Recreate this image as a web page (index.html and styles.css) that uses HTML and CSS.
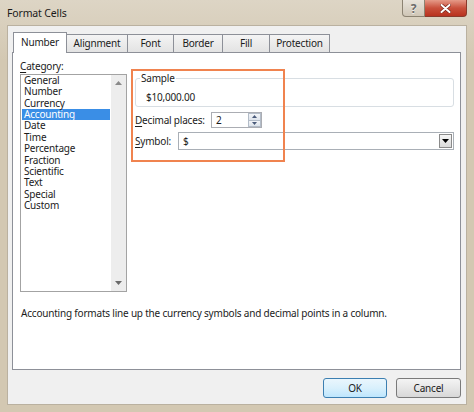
FILE: index.html
```html
<!DOCTYPE html>
<html lang="en">
<head>
<meta charset="utf-8">
<title>Format Cells</title>
<link rel="stylesheet" href="styles.css">
</head>
<body>
<div class="window">
  <div class="titlebar">
    <span class="title">Format Cells</span>
    <div class="caption-buttons">
      <span class="cap-btn cap-help">?</span>
      <span class="cap-btn cap-close">
        <svg width="11" height="9" viewBox="0 0 11 9"><path d="M1.5 1 L9.5 8 M9.5 1 L1.5 8" stroke="#7a2418" stroke-width="3.4" stroke-linecap="round"/><path d="M1.5 1 L9.5 8 M9.5 1 L1.5 8" stroke="#ffffff" stroke-width="2" stroke-linecap="round"/></svg>
      </span>
    </div>
  </div>
  <div class="client">
    <div class="tabs">
      <div class="tab tab-active tab-number">Number</div>
      <div class="tab tab-alignment">Alignment</div>
      <div class="tab tab-font">Font</div>
      <div class="tab tab-border">Border</div>
      <div class="tab tab-fill">Fill</div>
      <div class="tab tab-protection">Protection</div>
    </div>
    <div class="panel">
      <div class="left-col">
        <div class="field-label category-label"><u>C</u>ategory:</div>
        <div class="listbox">
          <ul class="list-items">
            <li>General</li>
            <li>Number</li>
            <li>Currency</li>
            <li class="selected">Accounting</li>
            <li>Date</li>
            <li>Time</li>
            <li>Percentage</li>
            <li>Fraction</li>
            <li>Scientific</li>
            <li>Text</li>
            <li>Special</li>
            <li>Custom</li>
          </ul>
          <div class="scrollbar">
            <svg class="arrow" width="7" height="4" viewBox="0 0 7 4"><path d="M0 4 L3.5 0 L7 4 Z" fill="#8a8a8a"/></svg>
            <svg class="arrow" width="7" height="4" viewBox="0 0 7 4"><path d="M0 0 L7 0 L3.5 4 Z" fill="#6a6a6a"/></svg>
          </div>
        </div>
      </div>
      <div class="right-col">
        <fieldset class="group">
          <legend>Sample</legend>
          <div class="sample-value">$10,000.00</div>
        </fieldset>
        <div class="field-row decimal-row">
          <span class="field-label decimal-label"><u>D</u>ecimal places:</span>
          <div class="spinner">
            <span class="spinner-value">2</span>
            <div class="spin-buttons">
              <span class="spin-btn"><svg width="5" height="3" viewBox="0 0 5 3"><path d="M0 3 L2.5 0 L5 3 Z" fill="#4a5a7a"/></svg></span>
              <span class="spin-btn"><svg width="5" height="3" viewBox="0 0 5 3"><path d="M0 0 L5 0 L2.5 3 Z" fill="#4a5a7a"/></svg></span>
            </div>
          </div>
        </div>
        <div class="field-row symbol-row">
          <span class="field-label symbol-label"><u>S</u>ymbol:</span>
          <div class="select">
            <span class="select-value">$</span>
            <span class="select-btn"><svg width="7" height="4" viewBox="0 0 7 4"><path d="M0 0 L7 0 L3.5 4 Z" fill="#000"/></svg></span>
          </div>
        </div>
      </div>
      <p class="description">Accounting formats line up the currency symbols and decimal points in a column.</p>
      <div class="highlight"></div>
    </div>
    <div class="footer">
      <button class="btn btn-default">OK</button>
      <button class="btn btn-cancel">Cancel</button>
    </div>
  </div>
</div>
</body>
</html>
```
FILE: styles.css
```css
* { box-sizing: border-box; }
html, body { margin: 0; padding: 0; }
body {
  width: 474px;
  height: 412px;
  overflow: hidden;
  font-family: "Noto Sans", "Open Sans", sans-serif;
  font-size: 10px;
  letter-spacing: -0.2px;
  color: #1b1b1b;
  background: #d4c9b4;
}
.window {
  width: 474px;
  height: 412px;
  display: flex;
  flex-direction: column;
  background: linear-gradient(#ddd5c5, #d3c8b2 60px, #d3c8b2);
}
.titlebar {
  height: 25px;
  display: flex;
  align-items: flex-start;
}
.title {
  padding: 6px 0 0 7px;
  font-size: 10.5px;
  letter-spacing: -0.15px;
  line-height: 15px;
  color: #1a1a1a;
}
.caption-buttons {
  margin-left: auto;
  margin-right: 7px;
  display: flex;
}
.cap-btn {
  height: 17px;
  display: flex;
  align-items: center;
  justify-content: center;
  border: 1px solid #8c8372;
  border-top: none;
}
.cap-help {
  width: 23px;
  border-radius: 0 0 0 4px;
  background: linear-gradient(#e8e3da, #cfc6b6);
  color: #6b6b6b;
  font-size: 12px;
  font-weight: bold;
  text-shadow: 0 1px 0 #f4f1ea;
}
.cap-close {
  width: 42px;
  border-left: none;
  border-color: #8a3a2c;
  border-radius: 0 0 4px 0;
  background: linear-gradient(#e59a88, #c9503c 50%, #b8321f);
}
.client {
  height: 380px;
  margin: 0 7px;
  background: #f0f0f0;
  border: 1px solid #bab1a0;
  display: flex;
  flex-direction: column;
}
.tabs {
  display: flex;
  align-items: flex-start;
  height: 26px;
  padding: 6px 0 0 5px;
  position: relative;
  z-index: 1;
}
.tab {
  height: 18px;
  margin-top: 2px;
  margin-left: -1px;
  border: 1px solid #8d9098;
  border-bottom: none;
  background: linear-gradient(#f4f4f4, #e3e3e3);
  text-align: center;
  line-height: 16px;
  color: #1b1b1b;
}
.tab-active {
  height: 21px;
  margin-top: 0;
  margin-left: 0;
  background: #fff;
  line-height: 19px;
}
.tab-number { width: 54px; }
.tab-alignment { width: 62px; }
.tab-font { width: 47px; }
.tab-border { width: 50px; }
.tab-fill { width: 48px; }
.tab-protection { width: 61px; }
.panel {
  position: relative;
  height: 318px;
  margin: 0 5px 0 4px;
  background: #fff;
  border: 1px solid #8d9098;
  display: grid;
  grid-template-columns: 107px 1fr;
  grid-template-rows: 233px auto;
  column-gap: 8px;
  align-content: start;
  padding: 6px 6px 0 7px;
}
.field-label { line-height: 15px; white-space: nowrap; }
.field-label u { text-decoration-thickness: 1px; text-underline-offset: 2px; }
.listbox {
  height: 218px;
  border: 1px solid #a3a3a3;
  display: flex;
}
.list-items {
  list-style: none;
  margin: 0;
  padding: 0 1px;
  flex: 1;
}
.list-items li {
  line-height: 11.36px;
  height: 11.36px;
  padding-left: 2px;
  white-space: nowrap;
}
.list-items li.selected {
  background: #3a8ee6;
  color: #fff;
}
.scrollbar {
  width: 15px;
  background: #ededed;
  display: flex;
  flex-direction: column;
  justify-content: space-between;
  align-items: center;
  padding: 6px 0 6px;
}
.right-col { display: flex; flex-direction: column; }
.group {
  margin: 13px 0 0;
  padding: 0 0 2px 4px;
  border: 1px solid #d8dee3;
  border-radius: 3px;
  min-width: 0;
}
.group legend {
  padding: 0 1px;
  line-height: 13px;
}
.sample-value {
  margin-top: 5px;
  padding-left: 6px;
  line-height: 14px;
}
.field-row { display: flex; align-items: center; }
.decimal-row { margin-top: 5px; height: 16px; }
.symbol-row { margin-top: 4px; height: 18px; }
.decimal-label { width: 76px; }
.symbol-label { width: 43px; }
.spinner {
  width: 51px;
  height: 16px;
  border: 1px solid #abadb3;
  display: flex;
}
.spinner-value { flex: 1; padding-left: 4px; line-height: 14px; }
.spin-buttons {
  width: 13px;
  display: flex;
  flex-direction: column;
}
.spin-btn {
  flex: 1;
  display: flex;
  align-items: center;
  justify-content: center;
  background: linear-gradient(#f3f5f8, #dde3eb);
  border: 1px solid #b3bcc8;
}
.spin-btn + .spin-btn { border-top: none; }
.select {
  width: 276px;
  height: 18px;
  border: 1px solid #a9afb6;
  display: flex;
}
.select-value { flex: 1; padding-left: 4px; line-height: 16px; }
.select-btn {
  width: 13px;
  margin: 1px;
  display: flex;
  align-items: center;
  justify-content: center;
  background: linear-gradient(#f6f6f6, #dadada);
  border: 1px solid #8b8b8b;
}
.description {
  grid-column: 1 / -1;
  margin: 14px 0 0 1px;
  line-height: 14px;
  white-space: nowrap;
}
.highlight {
  position: absolute;
  left: 118px;
  top: 16px;
  width: 154px;
  height: 93px;
  border: 2px solid #f0834f;
  pointer-events: none;
}
.footer {
  display: flex;
  justify-content: flex-end;
  gap: 9px;
  padding: 8px 5px 0 0;
}
.btn {
  height: 20px;
  padding: 0;
  font-family: inherit;
  font-size: 10px;
  letter-spacing: -0.2px;
  color: #1b1b1b;
  border-radius: 3px;
  border: 1px solid #7a7a7a;
  background: linear-gradient(#f4f4f4, #e6e6e6 50%, #d8d8d8);
}
.btn-default {
  width: 64px;
  border-color: #3c7fb1;
  background: linear-gradient(#eaf6fd, #d9f0fc 50%, #bee6fd);
}
.btn-cancel { width: 65px; }
```
